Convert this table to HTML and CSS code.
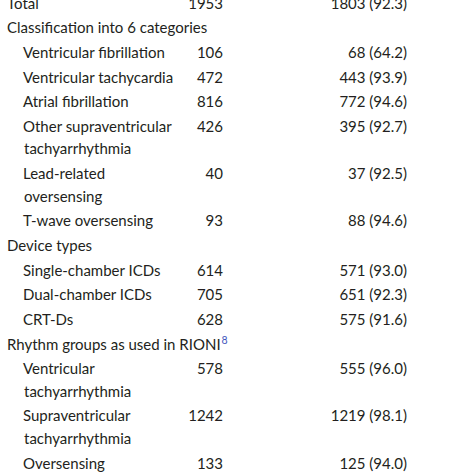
FILE: index.html
```html
<!DOCTYPE html>
<html>
<head>
<meta charset="utf-8">
<link rel="stylesheet" href="styles.css">
</head>
<body>
<div class="table">
  <div class="row"><div class="label">Total</div><div class="n">1953</div><div class="res">1803 (92.3)</div></div>
  <div class="row group"><div class="label">Classification into 6 categories</div></div>
  <div class="row sub"><div class="label">Ventricular fibrillation</div><div class="n">106</div><div class="res">68 (64.2)</div></div>
  <div class="row sub"><div class="label">Ventricular tachycardia</div><div class="n">472</div><div class="res">443 (93.9)</div></div>
  <div class="row sub"><div class="label">Atrial fibrillation</div><div class="n">816</div><div class="res">772 (94.6)</div></div>
  <div class="row sub"><div class="label">Other supraventricular<br><span class="cont">tachyarrhythmia</span></div><div class="n">426</div><div class="res">395 (92.7)</div></div>
  <div class="row sub"><div class="label">Lead-related<br><span class="cont">oversensing</span></div><div class="n">40</div><div class="res">37 (92.5)</div></div>
  <div class="row sub"><div class="label">T-wave oversensing</div><div class="n">93</div><div class="res">88 (94.6)</div></div>
  <div class="row group"><div class="label">Device types</div></div>
  <div class="row sub"><div class="label">Single-chamber ICDs</div><div class="n">614</div><div class="res">571 (93.0)</div></div>
  <div class="row sub"><div class="label">Dual-chamber ICDs</div><div class="n">705</div><div class="res">651 (92.3)</div></div>
  <div class="row sub"><div class="label">CRT-Ds</div><div class="n">628</div><div class="res">575 (91.6)</div></div>
  <div class="row group"><div class="label">Rhythm groups as used in RIONI<sup class="ref">8</sup></div></div>
  <div class="row sub"><div class="label">Ventricular<br><span class="cont">tachyarrhythmia</span></div><div class="n">578</div><div class="res">555 (96.0)</div></div>
  <div class="row sub"><div class="label">Supraventricular<br><span class="cont">tachyarrhythmia</span></div><div class="n">1242</div><div class="res">1219 (98.1)</div></div>
  <div class="row sub"><div class="label">Oversensing</div><div class="n">133</div><div class="res">125 (94.0)</div></div>
</div>
</body>
</html>
```
FILE: styles.css
```css
html, body {
  margin: 0;
  padding: 0;
  background: #ffffff;
}
body {
  font-family: "Lato", "DejaVu Sans", sans-serif;
  font-size: 15px;
  color: #231f20;
}
.table {
  margin-top: -9.5px;
  padding-left: 7px;
  display: flex;
  flex-direction: column;
}
.row {
  display: grid;
  grid-template-columns: 168px 48px 184px;
  line-height: 22.4px;
  padding: 1.15px 0;
}
.row.group {
  grid-template-columns: 1fr;
}
.label {
  white-space: nowrap;
  min-width: 0;
}
.sub .label {
  padding-left: 16px;
}
.cont {
  padding-left: 1px;
}
.n, .res {
  text-align: right;
}
.ref {
  color: #3f56bd;
  font-size: 10.5px;
  line-height: 0;
  vertical-align: 6px;
  margin-left: 1px;
}
```
